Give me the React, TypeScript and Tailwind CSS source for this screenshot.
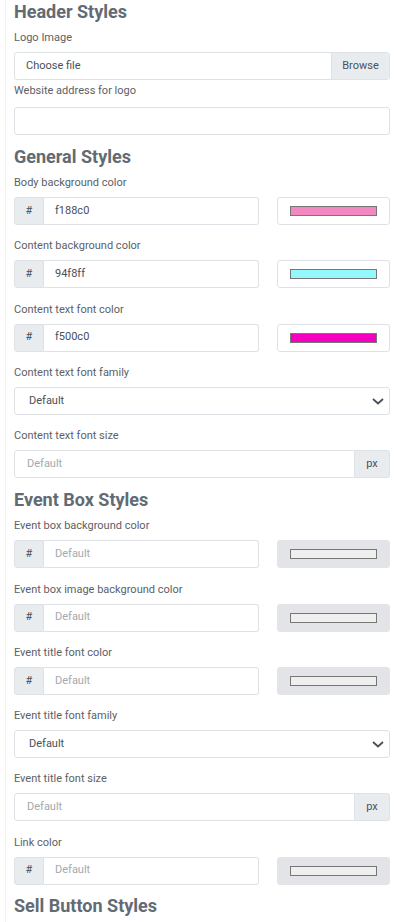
import { ReactNode } from "react";

const font = { fontFamily: "Roboto, 'Liberation Sans', sans-serif" };

const Heading = ({ children, first }: { children: ReactNode; first?: boolean }) => (
  <h2
    className={`text-[18px] font-bold leading-6 text-[#626b73] ${first ? "mb-[6px]" : "-mt-[3.5px] mb-[6.5px]"}`}
  >
    {children}
  </h2>
);

const Label = ({ children }: { children: ReactNode }) => (
  <div className="text-[11px] leading-4 text-[#5b6167] mb-[6px]">{children}</div>
);

const ColorField = ({ label, value, swatch }: { label: string; value?: string; swatch?: string }) => (
  <div className="mb-[13.25px]">
    <Label>{label}</Label>
    <div className="flex gap-[18px]">
      <div className="flex flex-1 h-7">
        <div className="w-[30px] flex items-center justify-center bg-[#e9ecef] border border-[#dee2e6] rounded-l-[3px] text-[11px] text-[#495057]">
          #
        </div>
        <div className="flex-1 flex items-center pl-[11px] border border-l-0 border-[#dee2e6] rounded-r-[3px] bg-white text-[11px]">
          {value ? (
            <span className="text-[#495057]">{value}</span>
          ) : (
            <span className="text-[#a4a9ae]">Default</span>
          )}
        </div>
      </div>
      <div
        className={`w-[113px] h-7 flex items-center justify-center rounded-[3px] border ${
          swatch ? "bg-white border-[#dee2e6]" : "bg-[#e2e4e8] border-[#e2e4e8]"
        }`}
      >
        <div
          className={`w-[87px] h-[10px] border border-[#767676] ${swatch ? "" : "bg-[#efefef]"}`}
          style={swatch ? { backgroundColor: swatch } : undefined}
        />
      </div>
    </div>
  </div>
);

const SelectField = ({ label }: { label: string }) => (
  <div className="mb-[13.25px]">
    <Label>{label}</Label>
    <div className="relative h-7">
      <select
        className="w-full h-7 appearance-none border border-[#dee2e6] rounded-[3px] bg-white pl-[14px] text-[11px] text-[#495057] outline-none"
        style={font}
        defaultValue="Default"
      >
        <option>Default</option>
      </select>
      <svg
        className="absolute right-[6px] top-[11px] pointer-events-none"
        width="12"
        height="7"
        viewBox="0 0 12 7"
        fill="none"
      >
        <path d="M1 1l5 4.5L11 1" stroke="#4a4f54" strokeWidth="1.8" />
      </svg>
    </div>
  </div>
);

const SizeField = ({ label }: { label: string }) => (
  <div className="mb-[13.25px]">
    <Label>{label}</Label>
    <div className="flex h-7">
      <div className="flex-1 flex items-center pl-[12px] border border-[#dee2e6] rounded-l-[3px] bg-white text-[11px] text-[#a4a9ae]">
        Default
      </div>
      <div className="w-[35px] flex items-center justify-center bg-[#e9ecef] border border-l-0 border-[#dee2e6] rounded-r-[3px] text-[11px] text-[#495057]">
        px
      </div>
    </div>
  </div>
);

export default function App() {
  return (
    <div className="bg-white min-h-screen pl-[5px] overflow-hidden" style={font}>
      <div className="border-l border-[#f3f3f3] pl-[8px] pr-[10px] h-[922px]">
        <Heading first>Header Styles</Heading>
        <div className="mb-[3px]">
          <Label>Logo Image</Label>
          <div className="flex h-7 border border-[#dee2e6] rounded-[3px] bg-white">
            <div className="flex-1 flex items-center pl-[11px] text-[11px] text-[#495057]">Choose file</div>
            <div className="w-[58px] flex items-center justify-center bg-[#e9ecef] border-l border-[#dee2e6] text-[11px] text-[#495057] rounded-r-[3px]">
              Browse
            </div>
          </div>
        </div>
        <div className="mb-[13px]">
          <div className="text-[11px] leading-4 text-[#5b6167] mb-2">Website address for logo</div>
          <div className="h-7 border border-[#dee2e6] rounded-[3px] bg-white" />
        </div>

        <Heading>General Styles</Heading>
        <ColorField label="Body background color" value="f188c0" swatch="#f188c0" />
        <ColorField label="Content background color" value="94f8ff" swatch="#94f8ff" />
        <ColorField label="Content text font color" value="f500c0" swatch="#f500c0" />
        <SelectField label="Content text font family" />
        <SizeField label="Content text font size" />

        <Heading>Event Box Styles</Heading>
        <ColorField label="Event box background color" />
        <ColorField label="Event box image background color" />
        <ColorField label="Event title font color" />
        <SelectField label="Event title font family" />
        <SizeField label="Event title font size" />
        <ColorField label="Link color" />

        <Heading>Sell Button Styles</Heading>
      </div>
    </div>
  );
}
